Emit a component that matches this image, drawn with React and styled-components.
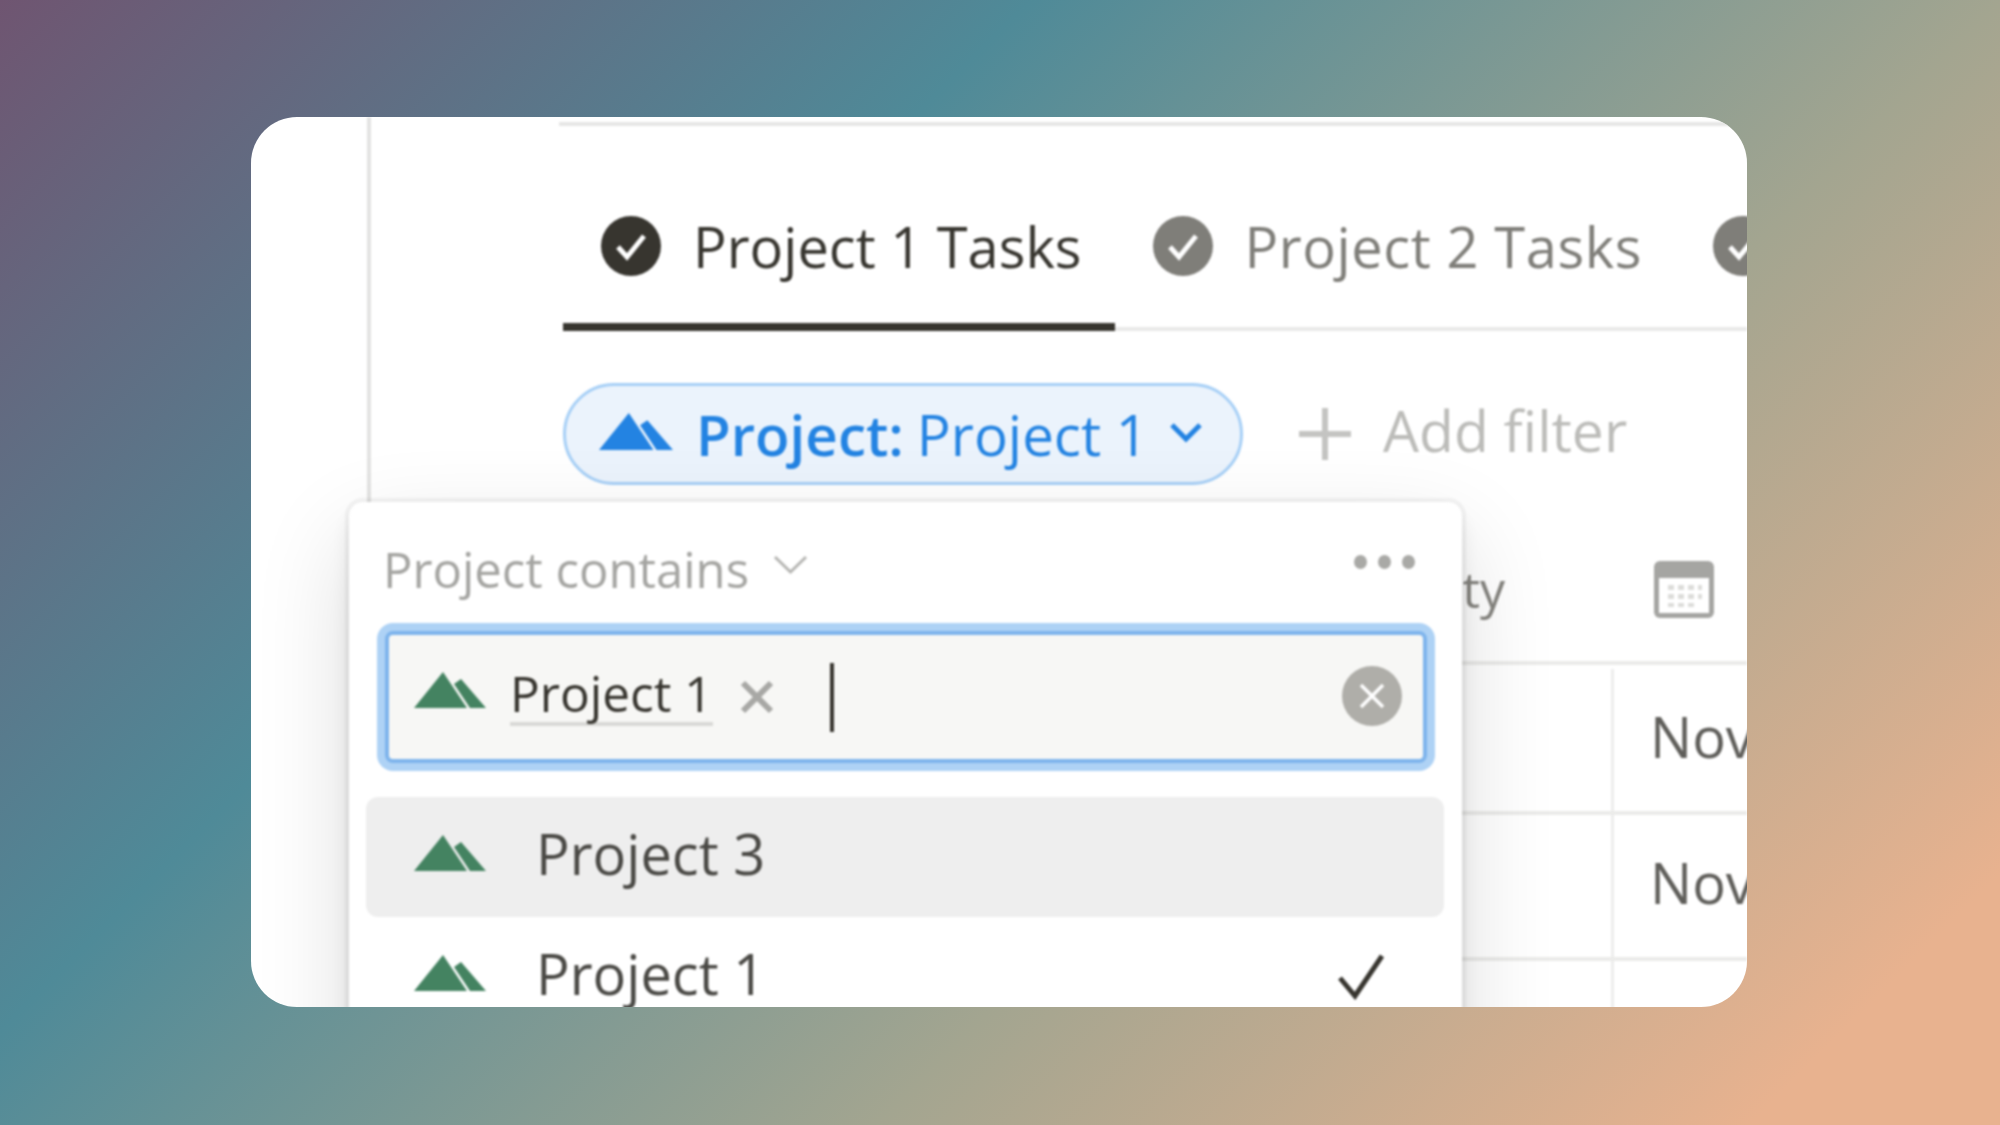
import React from 'react';
import styled, { createGlobalStyle } from 'styled-components';

const GlobalStyle = createGlobalStyle`
  html, body {
    margin: 0;
    padding: 0;
  }
  body {
    font-family: "Open Sans", "Noto Sans", sans-serif;
  }
`;

const Page = styled.div`
  width: 2000px;
  height: 1125px;
  box-sizing: border-box;
  padding: 117px 0 0 251px;
  overflow: hidden;
  background: linear-gradient(135deg, #6f5571 0%, #4f8a98 33%, #a3a590 64%, #e8b28f 92%);
`;

const Card = styled.div`
  position: relative;
  display: flex;
  width: 1496px;
  height: 890px;
  overflow: hidden;
  background: #fff;
  border-radius: 46px;
`;

const Blurred = styled.div`
  display: flex;
  width: 100%;
  filter: blur(1.1px);
`;

const Sidebar = styled.div`
  flex: none;
  width: 116px;
  border-right: 4px solid #e3e3e2;
`;

const Main = styled.div`
  flex: 1;
  min-width: 0;
  margin-left: 188px;
  padding-top: 5px;
`;

const TopRule = styled.div`
  height: 4px;
  background: #e6e6e5;
`;

const Tabs = styled.div`
  display: flex;
  margin-left: 4px;
  box-shadow: inset 0 -4px 0 #e9e9e8;
`;

const Tab = styled.div`
  display: flex;
  flex: none;
  align-items: center;
  gap: 32px;
  padding: 90px 33px 47px 38px;
  border-bottom: 8px solid ${(p) => (p.$active ? '#37352f' : 'transparent')};
  color: ${(p) => (p.$active ? '#37352f' : '#7f7e79')};
  font-size: 56px;
  letter-spacing: ${(p) => (p.$active ? '0' : '0.6px')};
  line-height: 60px;
  white-space: nowrap;
`;

const FilterRow = styled.div`
  display: flex;
  align-items: center;
  gap: 56px;
  margin: 52px 0 0 4px;
`;

const Pill = styled.div`
  display: flex;
  flex: none;
  align-items: center;
  box-sizing: border-box;
  width: 680px;
  height: 102px;
  padding-left: 33px;
  border: 3px solid #a6cff6;
  border-radius: 51px;
  background: #ebf3fc;
  color: #2383e2;
  font-size: 56.5px;
  white-space: nowrap;
`;

const PillLabel = styled.span`
  margin-left: 23px;
  font-weight: 600;
`;

const PillValue = styled.span`
  margin-left: 13px;
`;

const PillChevron = styled.svg`
  flex: none;
  margin: 0 0 3px 21px;
`;

const AddFilter = styled.div`
  display: flex;
  align-items: center;
  gap: 32px;
  color: #bcbcb9;
  font-size: 57px;
  white-space: nowrap;
`;

const AddFilterLabel = styled.span`
  margin-bottom: 8px;
`;

const TableHead = styled.div`
  display: flex;
  height: 180px;
  box-sizing: border-box;
  border-bottom: 4px solid #ebebe9;
`;

const NameHead = styled.div`
  flex: none;
  display: flex;
  justify-content: flex-end;
  box-sizing: border-box;
  width: 1052px;
  padding: 72px 106px 0 0;
  color: #85847f;
  font-size: 50px;
  line-height: 64px;
`;

const DateHead = styled.div`
  padding: 76px 0 0 43px;
`;

const TableRow = styled.div`
  display: flex;
  box-sizing: border-box;
  height: 146px;
  margin-top: ${(p) => (p.$first ? '4px' : '0')};
  border-bottom: 4px solid #ebebe9;
`;

const NameCell = styled.div`
  flex: none;
  width: 1052px;
`;

const DateCell = styled.div`
  display: flex;
  align-items: center;
  padding: 0 0 8px 36px;
  border-left: 3px solid #ededec;
  color: #5f5e5a;
  font-size: 56px;
  white-space: nowrap;
`;

const Popover = styled.div`
  position: absolute;
  top: 385px;
  left: 98px;
  box-sizing: border-box;
  width: 1113px;
  height: 600px;
  border-radius: 14px;
  background: #fff;
  box-shadow:
    0 0 0 4px rgba(15, 15, 15, 0.05),
    0 12px 24px rgba(15, 15, 15, 0.08),
    0 36px 96px rgba(15, 15, 15, 0.14);
  filter: blur(1px);
`;

const PopoverHead = styled.div`
  display: flex;
  align-items: center;
  height: 129px;
  box-sizing: border-box;
  padding: 0 47px 0 36px;
`;

const Condition = styled.div`
  margin: 4px 0 0 -2px;
  color: #a5a5a2;
  font-size: 49px;
  line-height: 60px;
  white-space: nowrap;
`;

const ConditionChevron = styled.svg`
  margin: 0 0 4px 24px;
`;

const Dots = styled.div`
  display: flex;
  gap: 11px;
  margin: 0 0 10px auto;
`;

const Dot = styled.span`
  width: 13px;
  height: 14px;
  border-radius: 50%;
  background: #a9a9a6;
`;

const InputBox = styled.div`
  display: flex;
  align-items: center;
  box-sizing: border-box;
  width: 1042px;
  height: 132px;
  margin-left: 36px;
  padding: 0 21px 0 25px;
  border: 4px solid #7eb4ec;
  border-radius: 8px;
  background: #f7f7f5;
  box-shadow: 0 0 0 8px #aed2f5;
`;

const Token = styled.span`
  margin: 0 0 4px 24px;
  border-bottom: 4px solid #d9d9d6;
  color: #37352f;
  font-size: 49.5px;
  line-height: 58px;
  white-space: nowrap;
`;

const TokenRemove = styled.svg`
  flex: none;
  margin-left: 27px;
`;

const Caret = styled.span`
  flex: none;
  width: 4px;
  height: 69px;
  margin-left: 56px;
  background: #37352f;
`;

const ClearButton = styled.svg`
  flex: none;
  margin: 0 0 2px auto;
`;

const Options = styled.div`
  margin: 34px 18px 0 17px;
`;

const Option = styled.div`
  display: flex;
  align-items: center;
  box-sizing: border-box;
  height: 120px;
  padding: 0 60px 0 48px;
  border-radius: 12px;
  background: ${(p) => (p.$hover ? '#eeeeee' : 'transparent')};
  color: #4a4945;
  font-size: 56px;
  white-space: nowrap;
`;

const OptionLabel = styled.span`
  margin: 0 0 9px 50px;
`;

const OptionCheck = styled.svg`
  margin-left: auto;
`;

const MountainIcon = styled.svg`
  flex: none;
  margin-bottom: ${(p) => p.$lift}px;
`;

function CheckBadge({ color }) {
  return (
    <svg width="60" height="60" viewBox="0 0 60 60" style={{ flex: 'none' }}>
      <circle cx="30" cy="30" r="30" fill={color} />
      <path d="M17 31l9 10 17-21" fill="none" stroke="#fff" strokeWidth="5" />
    </svg>
  );
}

function Mountains({ color, lift, width = 72, height = 36 }) {
  return (
    <MountainIcon $lift={lift} width={width} height={height} viewBox="0 0 72 36">
      <path d="M0 36L29 0l24 36z" fill={color} />
      <path d="M40 12l7-5 25 29H56z" fill={color} />
    </MountainIcon>
  );
}

export default function App() {
  return (
    <Page>
      <GlobalStyle />
      <Card>
        <Blurred>
          <Sidebar />
          <Main>
            <TopRule />
            <Tabs>
              <Tab $active>
                <CheckBadge color="#37352f" />
                Project 1 Tasks
              </Tab>
              <Tab>
                <CheckBadge color="#7f7e79" />
                Project 2 Tasks
              </Tab>
              <Tab>
                <CheckBadge color="#7f7e79" />
              </Tab>
            </Tabs>
            <FilterRow>
              <Pill>
                <Mountains color="#2383e2" lift={5} width={74} height={39} />
                <PillLabel>Project:</PillLabel>
                <PillValue>Project 1</PillValue>
                <PillChevron width="34" height="21" viewBox="0 0 34 21">
                  <path d="M3 3l14 14L31 3" fill="none" stroke="#2383e2" strokeWidth="5" />
                </PillChevron>
              </Pill>
              <AddFilter>
                <svg width="52" height="52" viewBox="0 0 52 52">
                  <path d="M26 0v52M0 26h52" stroke="#c4c4c2" strokeWidth="6" />
                </svg>
                <AddFilterLabel>Add filter</AddFilterLabel>
              </AddFilter>
            </FilterRow>
            <TableHead>
              <NameHead>Priority</NameHead>
              <DateHead>
                <svg width="60" height="57" viewBox="0 0 60 57">
                  <rect width="60" height="57" rx="6" fill="#a5a5a2" />
                  <rect x="5" y="17" width="50" height="35" fill="#fff" />
                  <path
                    d="M14 24h6v5h-6zM24 24h6v5h-6zM34 24h6v5h-6zM44 24h4v5h-4zM14 33h6v5h-6zM24 33h6v5h-6zM34 33h6v5h-6zM44 33h4v5h-4zM14 42h6v4h-6zM24 42h6v4h-6zM34 42h6v4h-6z"
                    fill="#dcdcda"
                  />
                </svg>
              </DateHead>
            </TableHead>
            <TableRow $first>
              <NameCell />
              <DateCell>Nov 14, 2023</DateCell>
            </TableRow>
            <TableRow>
              <NameCell />
              <DateCell>Nov 14, 2023</DateCell>
            </TableRow>
            <TableRow>
              <NameCell />
              <DateCell />
            </TableRow>
          </Main>
        </Blurred>
        <Popover>
          <PopoverHead>
            <Condition>Project contains</Condition>
            <ConditionChevron width="35" height="20" viewBox="0 0 35 20">
              <path d="M2 2l15.5 15L33 2" fill="none" stroke="#b5b5b2" strokeWidth="3" />
            </ConditionChevron>
            <Dots>
              <Dot />
              <Dot />
              <Dot />
            </Dots>
          </PopoverHead>
          <InputBox>
            <Mountains color="#448361" lift={14} />
            <Token>Project 1</Token>
            <TokenRemove width="34" height="34" viewBox="0 0 34 34">
              <path d="M3 3l28 28M31 3L3 31" stroke="#a8a8a5" strokeWidth="6" />
            </TokenRemove>
            <Caret />
            <ClearButton width="60" height="60" viewBox="0 0 60 60">
              <circle cx="30" cy="30" r="30" fill="#afaea9" />
              <path d="M19 19l22 22M41 19L19 41" stroke="#fff" strokeWidth="3.5" />
            </ClearButton>
          </InputBox>
          <Options>
            <Option $hover>
              <Mountains color="#448361" lift={8} />
              <OptionLabel>Project 3</OptionLabel>
            </Option>
            <Option>
              <Mountains color="#448361" lift={8} />
              <OptionLabel>Project 1</OptionLabel>
              <OptionCheck width="46" height="46" viewBox="0 0 46 46">
                <path d="M2 24l15 18L44 2" fill="none" stroke="#37352f" strokeWidth="5" />
              </OptionCheck>
            </Option>
          </Options>
        </Popover>
      </Card>
    </Page>
  );
}
